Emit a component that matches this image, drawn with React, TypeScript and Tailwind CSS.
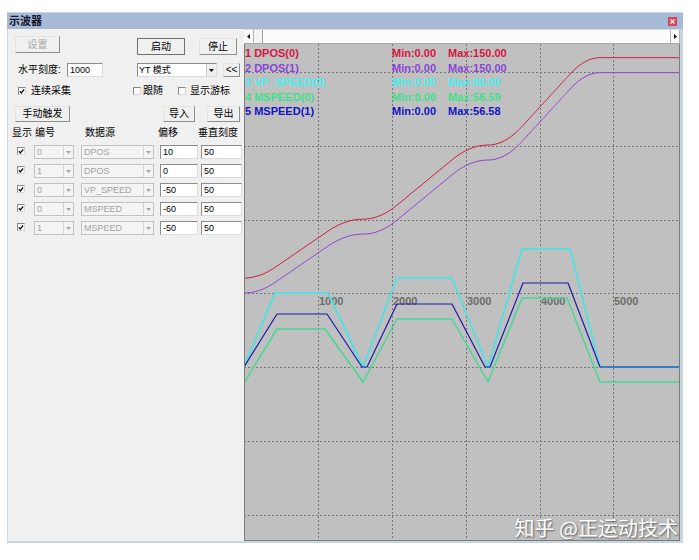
import React from "react";

type Pt = [number, number];

// trace data in page coordinates (chart spans x 244..680, y 44..541)
const CYAN: Pt[] = [
  [244, 367], [275, 293], [328, 293], [363, 367], [397, 278], [452, 278],
  [488, 367], [522, 249], [570, 249], [600, 367], [680, 367],
];
const BLUE: Pt[] = [
  [244, 367], [277, 314], [327, 314], [362, 367], [367, 367], [397, 304],
  [452, 304], [485, 367], [490, 367], [523, 283], [568, 283], [600, 367], [680, 367],
];
const GREEN: Pt[] = [
  [244, 383], [277, 329], [325, 329], [363, 382], [397, 319], [452, 319],
  [488, 382], [522, 298], [567, 298], [600, 382], [680, 382],
];

const GRID_X = [318, 392, 466, 540, 613];
const GRID_Y = [72, 146, 220, 293, 367, 441, 515];
const AXIS = ["1000", "2000", "3000", "4000", "5000"];

const toPoints = (pts: Pt[]) => pts.map(([x, y]) => `${x},${y}`).join(" ");

function speedAt(x: number) {
  for (let i = 0; i < CYAN.length - 1; i++) {
    const [x0, y0] = CYAN[i];
    const [x1, y1] = CYAN[i + 1];
    if (x >= x0 && x <= x1) return 367 - (y0 + ((y1 - y0) * (x - x0)) / (x1 - x0));
  }
  return 0;
}

// position = integral of the demand speed
function dpos(y0: number, k: number) {
  let acc = 0;
  const out: string[] = [];
  for (let x = 244; x <= 680; x++) {
    if (x > 244) acc += speedAt(x - 0.5);
    out.push(`${x},${(y0 - acc * k).toFixed(1)}`);
  }
  return out.join(" ");
}

const LEGEND = [
  { name: "1 DPOS(0)", min: "Min:0.00", max: "Max:150.00", color: "text-[#d4173f]" },
  { name: "2 DPOS(1)", min: "Min:0.00", max: "Max:150.00", color: "text-[#8a44d6]" },
  { name: "3 VP_SPEED(0)", min: "Min:0.00", max: "Max:80.00", color: "text-[#48eeee]" },
  { name: "4 MSPEED(0)", min: "Min:0.00", max: "Max:56.59", color: "text-[#3fe08a]" },
  { name: "5 MSPEED(1)", min: "Min:0.00", max: "Max:56.58", color: "text-[#1414c4]" },
];

const ROWS = [
  { id: "0", src: "DPOS", off: "10", scale: "50" },
  { id: "1", src: "DPOS", off: "0", scale: "50" },
  { id: "0", src: "VP_SPEED", off: "-50", scale: "50" },
  { id: "0", src: "MSPEED", off: "-60", scale: "50" },
  { id: "1", src: "MSPEED", off: "-50", scale: "50" },
];

const Btn: React.FC<{ children: React.ReactNode; className?: string; disabled?: boolean; def?: boolean }> = ({
  children,
  className = "",
  disabled = false,
  def = false,
}) => (
  <div
    className={`flex items-center justify-center bg-[#f0f0f0] text-[10px] leading-none border ${
      def
        ? "border-[#707070]"
        : "border-t-[#e4e4e4] border-l-[#e4e4e4] border-r-[#8e8e8e] border-b-[#8e8e8e]"
    } ${disabled ? "text-[#a8a8a8]" : "text-black"} ${className}`}
  >
    {children}
  </div>
);

const Check: React.FC<{ checked?: boolean }> = ({ checked }) => (
  <span className="w-[8px] h-[8px] shrink-0 bg-white border border-t-[#8a8a8a] border-l-[#8a8a8a] border-r-[#d8d8d8] border-b-[#d8d8d8] flex items-center justify-center">
    {checked && (
      <svg width="7" height="7" viewBox="0 0 7 7">
        <path d="M1 3.2 L2.7 5.2 L6 1.2" stroke="#111" strokeWidth="1.5" fill="none" />
      </svg>
    )}
  </span>
);

const Arrow: React.FC<{ color?: string }> = ({ color = "#111" }) => (
  <svg width="5" height="3" viewBox="0 0 5 3">
    <path d="M0 0 H5 L2.5 3 Z" fill={color} />
  </svg>
);

const Combo: React.FC<{ value: string; className: string }> = ({ value, className }) => (
  <div className={`flex h-[14px] border border-[#c2c2c2] bg-[#f4f4f4] ${className}`}>
    <span className="flex-1 pl-[2px] text-[9px] leading-[12px] text-[#a2a2a2] overflow-hidden">{value}</span>
    <span className="w-[10px] border-l border-[#d4d4d4] flex items-center justify-center">
      <Arrow color="#a8a8a8" />
    </span>
  </div>
);

const Field: React.FC<{ value: string; className: string }> = ({ value, className }) => (
  <div
    className={`h-[14px] bg-white border border-t-[#8c8c8c] border-l-[#8c8c8c] border-r-[#dcdcdc] border-b-[#dcdcdc] pl-[2px] text-[9px] leading-[12px] text-black ${className}`}
  >
    {value}
  </div>
);

const TitleBar = () => (
  <div className="h-[17px] flex items-center bg-[#a6bad6] border-t border-[#c8d6e8]">
    <span className="ml-[2px] text-[11px] font-bold text-[#14142a]">示波器</span>
    <span className="ml-auto mr-[6px] w-[9px] h-[9px] bg-[#d4465a] flex items-center justify-center">
      <svg width="5" height="5" viewBox="0 0 5 5">
        <path d="M0.5 0.5 L4.5 4.5 M4.5 0.5 L0.5 4.5" stroke="#fff" strokeWidth="1.2" />
      </svg>
    </span>
  </div>
);

const LeftPanel = () => (
  <div className="w-[237px] bg-[#f0f0f0] border-l border-[#cfd9e6] flex flex-col text-[10px] text-black">
    {/* buttons */}
    <div className="flex items-start mt-[7px] h-[19px]">
      <Btn disabled className="ml-[7px] w-[45px] h-[17px]">设置</Btn>
      <Btn def className="ml-[77px] mt-[2px] w-[48px] h-[17px]">启动</Btn>
      <Btn className="ml-[14px] mt-[2px] w-[38px] h-[17px]">停止</Btn>
    </div>
    {/* scale + mode */}
    <div className="flex items-center mt-[8px] h-[14px]">
      <span className="ml-[10px] w-[49px] leading-none">水平刻度:</span>
      <Field value="1000" className="w-[36px]" />
      <div className="ml-[34px] w-[80px] h-[14px] flex bg-white border border-t-[#8c8c8c] border-l-[#8c8c8c] border-r-[#dcdcdc] border-b-[#dcdcdc]">
        <span className="flex-1 pl-[1px] text-[9px] leading-[12px]">YT 模式</span>
        <span className="w-[10px] border-l border-[#c8c8c8] bg-[#f0f0f0] flex items-center justify-center">
          <Arrow />
        </span>
      </div>
      <Btn className="ml-[6px] w-[17px] h-[14px] text-[9px]">&lt;&lt;</Btn>
    </div>
    {/* checkboxes */}
    <div className="flex items-center mt-[9px] h-[10px]">
      <div className="ml-[10px] w-[115px] flex items-center gap-[5px]">
        <Check checked />
        <span className="leading-none">连续采集</span>
      </div>
      <div className="w-[45px] flex items-center gap-[2px]">
        <Check />
        <span className="leading-none">跟随</span>
      </div>
      <div className="flex items-center gap-[4px]">
        <Check />
        <span className="leading-none">显示游标</span>
      </div>
    </div>
    {/* trigger / import / export */}
    <div className="flex items-center mt-[10px] h-[16px]">
      <Btn className="ml-[7px] w-[55px] h-[16px]">手动触发</Btn>
      <Btn className="ml-[93px] w-[32px] h-[16px]">导入</Btn>
      <Btn className="ml-[12px] w-[33px] h-[16px]">导出</Btn>
    </div>
    {/* header */}
    <div className="flex items-center mt-[5px] h-[12px] leading-none">
      <span className="ml-[4px] w-[23px]">显示</span>
      <span className="w-[50px]">编号</span>
      <span className="w-[73px]">数据源</span>
      <span className="w-[40px]">偏移</span>
      <span>垂直刻度</span>
    </div>
    {/* channels */}
    <div className="flex flex-col gap-[5px] mt-[6px]">
      {ROWS.map((r, i) => (
        <div key={i} className="flex items-start h-[14px]">
          <div className="ml-[9px] w-[17px] pt-[2px]">
            <Check checked />
          </div>
          <Combo value={r.id} className="w-[40px]" />
          <Combo value={r.src} className="ml-[7px] w-[73px]" />
          <Field value={r.off} className="ml-[6px] w-[38px]" />
          <Field value={r.scale} className="ml-[3px] w-[41px]" />
        </div>
      ))}
    </div>
  </div>
);

const Scrollbar = () => (
  <div className="h-[15px] flex bg-[#fbfbfb] border-t border-[#d8d8d8] border-b border-b-[#a8a8a8]">
    <div className="w-[10px] border-r border-[#b4b4b4] flex items-center justify-center">
      <svg width="3" height="5" viewBox="0 0 3 5">
        <path d="M3 0 V5 L0 2.5 Z" fill="#111" />
      </svg>
    </div>
    <div className="w-[9px] border-r border-[#9c9c9c] bg-[#f4f4f4]" />
    <div className="flex-1" />
    <div className="w-[10px] border-l border-r border-[#b4b4b4] flex items-center justify-center">
      <svg width="3" height="5" viewBox="0 0 3 5">
        <path d="M0 0 V5 L3 2.5 Z" fill="#111" />
      </svg>
    </div>
  </div>
);

const Chart = () => (
  <div className="relative h-[497px] bg-[#c0c0c0] border-l border-r border-b border-[#7c7c7c] overflow-hidden">
    <svg width="436" height="497" viewBox="244 44 436 497" className="block absolute left-[-1px] top-0">
      <g stroke="#767676" strokeWidth="1" strokeDasharray="2 2" shapeRendering="crispEdges">
        {GRID_X.map((x) => (
          <line key={x} x1={x + 0.5} y1={44} x2={x + 0.5} y2={541} />
        ))}
        {GRID_Y.map((y) => (
          <line key={y} x1={244} y1={y + 0.5} x2={680} y2={y + 0.5} />
        ))}
      </g>
      {AXIS.map((t, i) => (
        <text
          key={t}
          x={GRID_X[i] + 1}
          y={305}
          fontFamily="Liberation Sans, sans-serif"
          fontWeight="bold"
          fontSize="11"
          fill="#6c6c6c"
        >
          {t}
        </text>
      ))}
      <polyline points={toPoints(CYAN)} fill="none" stroke="#58dede" strokeWidth="2" strokeLinejoin="round" />
      <polyline points={toPoints(GREEN)} fill="none" stroke="#46d892" strokeWidth="1.5" strokeLinejoin="round" />
      <polyline points={toPoints(BLUE)} fill="none" stroke="#1c1ca8" strokeWidth="1.2" strokeLinejoin="round" />
      <polyline points={dpos(278, 0.00925)} fill="none" stroke="#cc2244" strokeWidth="1" />
      <polyline points={dpos(293, 0.00925)} fill="none" stroke="#9446d6" strokeWidth="1" />
    </svg>

    <div className="absolute left-0 top-[2px] flex flex-col text-[11px] font-bold leading-[14.5px] font-['Liberation_Sans',sans-serif]">
      {LEGEND.map((l) => (
        <div key={l.name} className={`flex ${l.color}`}>
          <span className="w-[147px]">{l.name}</span>
          <span className="w-[56px]">{l.min}</span>
          <span>{l.max}</span>
        </div>
      ))}
    </div>

    <div className="absolute right-[1px] bottom-[0px] text-[20px] leading-[24px] text-white font-['Noto_Sans_CJK_SC',sans-serif] [text-shadow:1px_1px_2px_rgba(0,0,0,0.55)]">
      知乎 @正运动技术
    </div>
  </div>
);

export default function App() {
  return (
    <div className="w-[699px] h-[560px] bg-white pt-[12px] pl-[7px] font-['Liberation_Sans','Noto_Sans_CJK_SC',sans-serif]">
      <div className="w-[676px] h-[531px] flex flex-col bg-[#c9d4e1]">
        <TitleBar />
        <div className="flex h-[512px]">
          <LeftPanel />
          <div className="w-[436px] flex flex-col">
            <Scrollbar />
            <Chart />
          </div>
        </div>
      </div>
    </div>
  );
}
